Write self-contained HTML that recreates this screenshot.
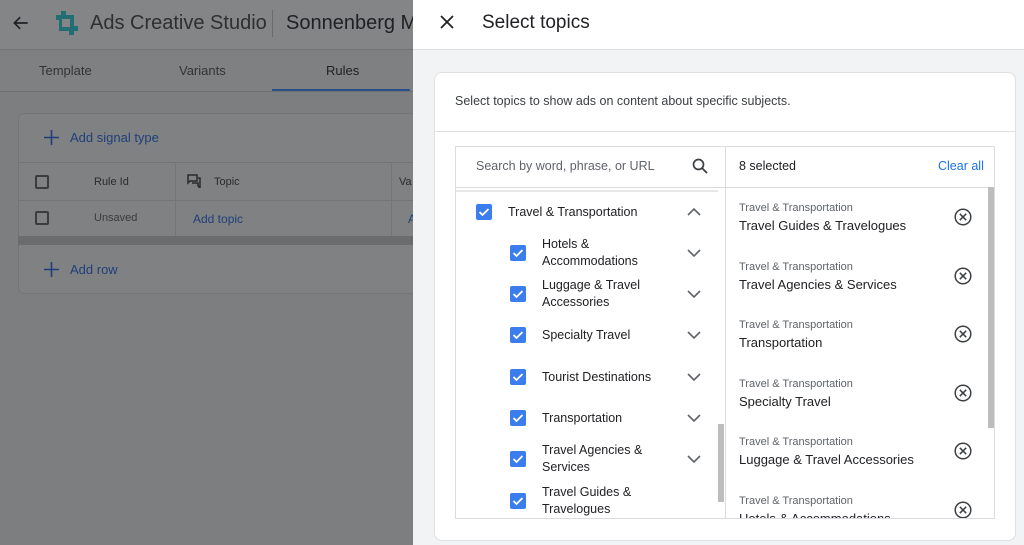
<!DOCTYPE html>
<html><head><style>
*{margin:0;padding:0;box-sizing:border-box}
body{width:1024px;height:545px;overflow:hidden;position:relative;font-family:"Liberation Sans",Arial,sans-serif;background:#7d7e80}
.a{position:absolute}
.t{position:absolute;white-space:nowrap}
.cb{position:absolute;width:16px;height:16px;background:#3b7ded;border-radius:2px}
.cb svg{position:absolute;left:0;top:0}
.chev{position:absolute}
.ri .c{font-size:11px;color:#5f6368}
.ri .n{font-size:13px;color:#202124;margin-top:4px}
</style></head><body>
<div class="a" style="left:0;top:0;width:413px;height:50px;background:#848587;border-bottom:1px solid #727375"></div>
<svg class="a" style="left:11px;top:13px" width="20" height="20" viewBox="0 0 24 24"><path d="M20 12H5M11 5l-7 7 7 7" stroke="#202124" stroke-width="2" fill="none"/></svg>
<svg class="a" style="left:52px;top:9px" width="28" height="28" viewBox="0 0 28 28"><path d="M4 6h5V2h5v4h8v11h4v5h-4v4h-5v-4H7V11H4z" fill="#236e72"/><rect x="10" y="10" width="8" height="8" fill="#848587"/></svg>
<div class="t" style="left:90px;top:12px;font-size:20px;color:#2e2f31">Ads Creative Studio</div>
<div class="a" style="left:272px;top:10px;width:1px;height:27px;background:#6a6b6d"></div>
<div class="t" style="left:286px;top:12px;font-size:20px;color:#202124">Sonnenberg Me</div>
<div class="a" style="left:0;top:51px;width:413px;height:41px;background:#7f8082;border-bottom:1px solid #6e6f71"></div>
<div class="t" style="left:39px;top:63px;font-size:13px;color:#333">Template</div>
<div class="t" style="left:179px;top:63px;font-size:13px;color:#333">Variants</div>
<div class="t" style="left:326px;top:63px;font-size:13px;color:#202124">Rules</div>
<div class="a" style="left:272px;top:89px;width:138px;height:2px;background:#2a4f8a"></div>
<div class="a" style="left:18px;top:113px;width:400px;height:181px;background:#808183;border:1px solid #747577;border-radius:6px"></div>
<svg class="a" style="left:44px;top:130px" width="15" height="15"><path d="M7.5 0v15M0 7.5h15" stroke="#1f3f7a" stroke-width="1.6"/></svg>
<div class="t" style="left:70px;top:130px;font-size:13px;color:#1f3f7a">Add signal type</div>
<div class="a" style="left:18px;top:162px;width:395px;height:1px;background:#747577"></div>
<div class="a" style="left:18px;top:200px;width:395px;height:1px;background:#747577"></div>
<div class="a" style="left:175px;top:162px;width:1px;height:74px;background:#747577"></div>
<div class="a" style="left:391px;top:162px;width:1px;height:74px;background:#747577"></div>
<div class="a" style="left:35px;top:175px;width:14px;height:14px;border:2px solid #3b3c3e;border-radius:2px"></div>
<div class="a" style="left:35px;top:211px;width:14px;height:14px;border:2px solid #3b3c3e;border-radius:2px"></div>
<div class="t" style="left:94px;top:176px;font-size:11px;color:#2a2b2d">Rule Id</div>
<div class="t" style="left:94px;top:212px;font-size:11px;color:#3a3b3d">Unsaved</div>
<svg class="a" style="left:187px;top:174px" width="16" height="14" viewBox="0 0 16 14"><path d="M1 1h9v6H3l-2 2z M5 9h6v3l2 2V4h-2" stroke="#2a2b2d" stroke-width="1.5" fill="none"/></svg>
<div class="t" style="left:214px;top:176px;font-size:11px;color:#2a2b2d">Topic</div>
<div class="t" style="left:193px;top:212px;font-size:12px;color:#1f3f7a">Add topic</div>
<div class="t" style="left:399px;top:176px;font-size:11px;color:#2a2b2d">Va</div>
<div class="t" style="left:408px;top:212px;font-size:12px;color:#1f3f7a">A</div>
<div class="a" style="left:18px;top:236px;width:395px;height:9px;background:#6b6c6e"></div>
<svg class="a" style="left:44px;top:262px" width="15" height="15"><path d="M7.5 0v15M0 7.5h15" stroke="#1f3f7a" stroke-width="1.6"/></svg>
<div class="t" style="left:70px;top:262px;font-size:13px;color:#1f3f7a">Add row</div>

<div class="a" style="left:413px;top:0;width:611px;height:545px;background:#f1f3f4"></div>
<div class="a" style="left:413px;top:0;width:611px;height:50px;background:#fff;border-bottom:1px solid #e0e0e0"></div>
<svg class="a" style="left:440px;top:15px" width="14" height="14" viewBox="0 0 14 14"><path d="M1 1l12 12M13 1L1 13" stroke="#202124" stroke-width="1.8"/></svg>
<div class="t" style="left:482px;top:12px;font-size:19px;color:#202124">Select topics</div>
<div class="a" style="left:434px;top:72px;width:582px;height:469px;background:#fff;border:1px solid #e0e0e0;border-radius:8px"></div>
<div class="t" style="left:455px;top:94px;font-size:12.5px;color:#3c4043">Select topics to show ads on content about specific subjects.</div>
<div class="a" style="left:434px;top:131px;width:582px;height:1px;background:#e0e0e0"></div>
<div class="a" style="left:455px;top:146px;width:540px;height:373px;border:1px solid #dadce0"></div>
<div class="a" style="left:725px;top:146px;width:1px;height:373px;background:#dadce0"></div>
<div class="a" style="left:455px;top:187px;width:540px;height:1px;background:#dadce0"></div>
<div class="a" style="left:456px;top:190px;width:262px;height:2px;background:#e8e8e8"></div>
<div class="t" style="left:476px;top:159px;font-size:12.5px;color:#5f6368">Search by word, phrase, or URL</div>
<svg class="a" style="left:692px;top:158px" width="16" height="16" viewBox="0 0 16 16"><circle cx="6.5" cy="6.5" r="5" stroke="#3c4043" stroke-width="1.7" fill="none"/><path d="M10.2 10.2L15 15" stroke="#3c4043" stroke-width="1.8"/></svg>
<div class="t" style="left:739px;top:159px;font-size:12.5px;color:#202124">8 selected</div>
<div class="t" style="left:938px;top:159px;font-size:12.5px;color:#1a73e8">Clear all</div>

<div class="cb" style="left:476px;top:204px"><svg width="16" height="16"><path d="M3.5 8l3 3 6-6" stroke="#fff" stroke-width="1.8" fill="none"/></svg></div>
<div class="t" style="left:508px;top:205px;font-size:12.5px;color:#202124">Travel &amp; Transportation</div>
<svg class="chev" style="left:687px;top:207px" width="14" height="9"><path d="M1 8l6-6 6 6" stroke="#5f6368" stroke-width="1.6" fill="none"/></svg>

<div id="lst"></div>
<div class="a" style="left:718px;top:424px;width:6px;height:78px;background:#bdbdbd"></div>
<div class="a" style="left:988px;top:187px;width:6px;height:241px;background:#bdbdbd"></div>

<script>
var L=[["Hotels &amp;<br>Accommodations",253],["Luggage &amp; Travel<br>Accessories",294],["Specialty Travel",335],["Tourist Destinations",377],["Transportation",418],["Travel Agencies &amp;<br>Services",459],["Travel Guides &amp;<br>Travelogues",501]];
var h="";
L.forEach(function(x){var y=x[1];var two=x[0].indexOf("<br>")>0;
h+='<div class="cb" style="left:510px;top:'+(y-8)+'px"><svg width="16" height="16"><path d="M3.5 8l3 3 6-6" stroke="#fff" stroke-width="1.8" fill="none"/></svg></div>';
h+='<div class="t" style="left:542px;top:'+(two?y-17:y-8)+'px;font-size:12.5px;line-height:17px;color:#202124">'+x[0]+'</div>';
if(y<490)h+='<svg class="chev" style="left:687px;top:'+(y-4)+'px" width="14" height="9"><path d="M1 1l6 6 6-6" stroke="#5f6368" stroke-width="1.6" fill="none"/></svg>';});
var R=["Travel Guides &amp; Travelogues","Travel Agencies &amp; Services","Transportation","Specialty Travel","Luggage &amp; Travel Accessories","Hotels &amp; Accommodations"];
R.forEach(function(n,i){var y=202+i*58.5;
h+='<div class="a ri" style="left:739px;top:'+y+'px;height:'+(i==5?316-y+202:60)+'px;overflow:hidden;width:230px"><div class="c">Travel &amp; Transportation</div><div class="n">'+n+'</div></div>';
h+='<svg class="a" style="left:954px;top:'+(y+6)+'px" width="18" height="18" viewBox="0 0 18 18"><circle cx="9" cy="9" r="7.8" stroke="#3c4043" stroke-width="1.5" fill="none"/><path d="M5.8 5.8l6.4 6.4M12.2 5.8l-6.4 6.4" stroke="#3c4043" stroke-width="1.5"/></svg>';});
document.getElementById("lst").innerHTML=h;
</script>
<div class="a" style="left:726px;top:518px;width:268px;height:1px;background:#dadce0"></div>
<div class="a" style="left:726px;top:519px;width:268px;height:21px;background:#fff"></div>
</body></html>
